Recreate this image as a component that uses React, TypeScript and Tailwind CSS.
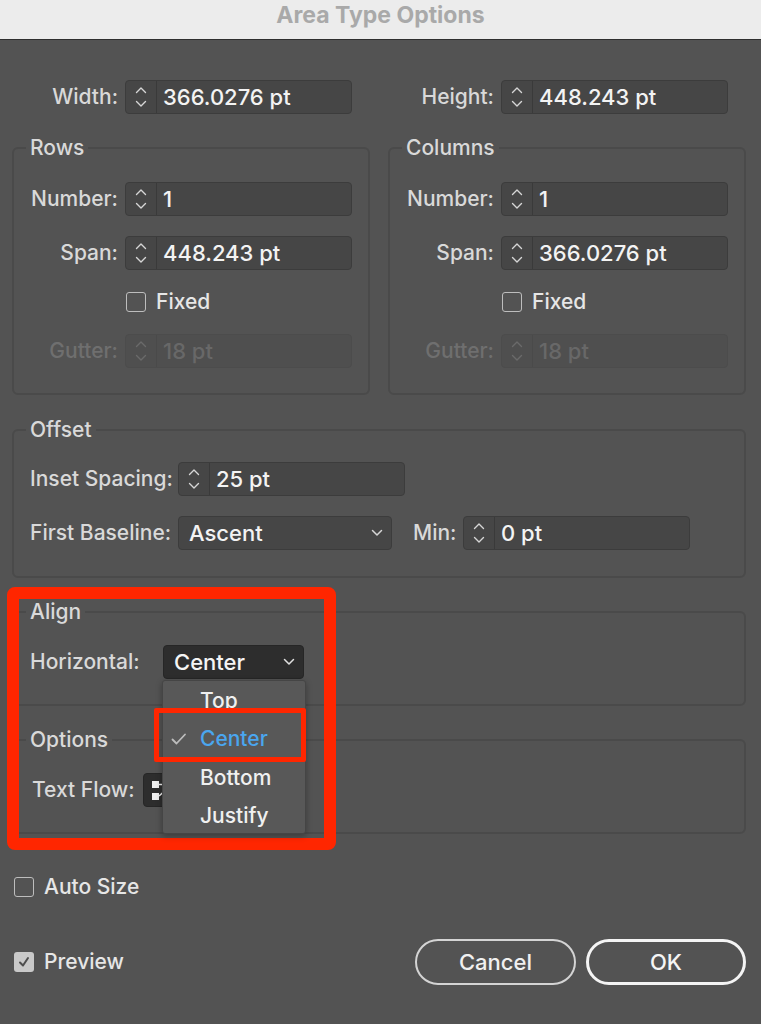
import type { ReactNode } from 'react';
import clsx from 'clsx';

const font = "font-['Inter','Noto_Sans',sans-serif]";

function Stepper({ disabled }: { disabled?: boolean }) {
  return (
    <svg
      width="14"
      height="28"
      viewBox="0 0 14 28"
      fill="none"
      stroke="currentColor"
      strokeWidth="1.4"
      strokeLinecap="round"
      strokeLinejoin="round"
      className={disabled ? 'text-[#6a6a6a]' : 'text-[#d6d6d6]'}
    >
      <path d="M2.5 9.5 L7 5 L11.5 9.5" />
      <path d="M2.5 18.5 L7 23 L11.5 18.5" />
    </svg>
  );
}

function Chevron({ className }: { className?: string }) {
  return (
    <svg width="12" height="8" viewBox="0 0 12 8" fill="none" stroke="currentColor" strokeWidth="1.5" strokeLinecap="round" strokeLinejoin="round" className={className}>
      <path d="M1.5 1.5 L6 6 L10.5 1.5" />
    </svg>
  );
}

function Spinner({ value, disabled, w = 'w-[227px]' }: { value: string; disabled?: boolean; w?: string }) {
  return (
    <div
      className={clsx(
        'flex h-[34px] shrink-0 rounded-[4px] border',
        w,
        disabled ? 'border-[#4c4c4c] bg-[#4f4f4f]' : 'border-[#3c3c3c] bg-[#464646]'
      )}
    >
      <div className={clsx('flex w-[31px] items-center justify-center border-r', disabled ? 'border-[#4a4a4a]' : 'border-[#3a3a3a]')}>
        <Stepper disabled={disabled} />
      </div>
      <div className={clsx('flex items-center pl-[6px] text-[22px] font-medium', disabled ? 'text-[#686868]' : 'text-[#f3f3f3]')}>{value}</div>
    </div>
  );
}

function Checkbox({ checked }: { checked?: boolean }) {
  if (checked) {
    return (
      <span className="flex h-[20px] w-[20px] items-center justify-center rounded-[3px] bg-[#c9c9c9]">
        <svg width="14" height="14" viewBox="0 0 14 14" fill="none" stroke="#4e4e4e" strokeWidth="2" strokeLinecap="round" strokeLinejoin="round">
          <path d="M3 7.5 L6 10.5 L11 3" />
        </svg>
      </span>
    );
  }
  return <span className="h-[20px] w-[20px] rounded-[3px] border-[1.5px] border-[#bdbdbd]" />;
}

function Group({ title, className, children }: { title: string; className?: string; children: ReactNode }) {
  return (
    <fieldset className={clsx('rounded-[6px] border-2 border-[#4a4a4a]', className)}>
      <legend className="ml-[12px] px-[4px] text-[21px] font-medium leading-[24px] text-[#d9d9d9]">{title}</legend>
      {children}
    </fieldset>
  );
}

function Label({ children, disabled, className }: { children: ReactNode; disabled?: boolean; className?: string }) {
  return (
    <span className={clsx('shrink-0 whitespace-nowrap text-[21px] font-medium', disabled ? 'text-[#6f6f6f]' : 'text-[#d9d9d9]', className)}>
      {children}
    </span>
  );
}

function Field({ label, value, disabled }: { label: string; value: string; disabled?: boolean }) {
  return (
    <div className="flex h-[34px] items-center gap-[7px]">
      <Label disabled={disabled} className="w-[91px] text-right">
        {label}
      </Label>
      <Spinner value={value} disabled={disabled} />
    </div>
  );
}

function FlowGroup({ title, span }: { title: string; span: string }) {
  return (
    <Group title={title}>
      <div className="flex flex-col gap-[20px] pb-[25px] pl-[13px] pt-[22px]">
        <Field label="Number:" value="1" />
        <Field label="Span:" value={span} />
        <div className="flex h-[24px] items-center">
          <span className="w-[99px]" />
          <Checkbox />
          <span className="ml-[10px] text-[21px] font-medium text-[#e6e6e6]">Fixed</span>
        </div>
        <Field label="Gutter:" value="18 pt" disabled />
      </div>
    </Group>
  );
}

const menuItems = ['Top', 'Center', 'Bottom', 'Justify'];

export default function App() {
  return (
    <div className={clsx('relative h-[1024px] w-[761px] overflow-hidden bg-[#535353]', font)}>
      {/* Title bar */}
      <div className="flex h-[40px] justify-center border-b border-[#2e2e2e] bg-[#ececec] pt-[1px]">
        <span className="text-[23px] font-bold leading-[28px] text-[#a9a9a9]">Area Type Options</span>
      </div>

      <div className="pl-[12px] pr-[15px]">
        {/* Width / Height */}
        <div className="mt-[40px] grid grid-cols-2 gap-x-[18px]">
          <div className="pl-[15px]">
            <Field label="Width:" value="366.0276 pt" />
          </div>
          <div className="pl-[15px]">
            <Field label="Height:" value="448.243 pt" />
          </div>
        </div>

        {/* Rows / Columns */}
        <div className="mt-[22px] grid grid-cols-2 gap-x-[18px]">
          <FlowGroup title="Rows" span="448.243 pt" />
          <FlowGroup title="Columns" span="366.0276 pt" />
        </div>

        {/* Offset */}
        <Group title="Offset" className="mt-[23px]">
          <div className="flex flex-col gap-[20px] pb-[26px] pl-[16px] pt-[20px]">
            <div className="flex h-[34px] items-center">
              <Label className="w-[148px] text-[20px]">Inset Spacing:</Label>
              <Spinner value="25 pt" />
            </div>
            <div className="flex h-[34px] items-center">
              <Label className="w-[148px] text-[20px]">First Baseline:</Label>
              <div className="flex h-[34px] w-[214px] shrink-0 items-center justify-between rounded-[4px] border border-[#3c3c3c] bg-[#464646] pl-[10px] pr-[8px]">
                <span className="text-[22px] font-medium text-[#f3f3f3]">Ascent</span>
                <Chevron className="text-[#d6d6d6]" />
              </div>
              <Label className="ml-[21px] w-[50px]">Min:</Label>
              <Spinner value="0 pt" />
            </div>
          </div>
        </Group>

        {/* Align */}
        <Group title="Align" className="mt-[22px]">
          <div className="flex h-[80px] items-start pl-[16px] pt-[21px]">
            <Label className="flex h-[34px] w-[133px] items-center">Horizontal:</Label>
            <div className="relative">
              <div className="flex h-[34px] w-[141px] items-center justify-between rounded-[4px] border border-[#262626] bg-[#2d2d2d] pl-[10px] pr-[8px]">
                <span className="text-[22px] font-medium text-[#f5f5f5]">Center</span>
                <Chevron className="text-[#e0e0e0]" />
              </div>
              {/* Open dropdown menu */}
              <div className="absolute left-[-1px] top-[35px] z-10 h-[154px] w-[144px] overflow-hidden rounded-[3px] border border-[#454545] bg-[#585858] shadow-[0_2px_6px_rgba(0,0,0,0.3)]">
                {menuItems.map((item) => (
                  <div key={item} className="relative flex h-[38.5px] shrink-0 items-center pl-[37px]">
                    {item === 'Center' && (
                      <svg width="16" height="14" viewBox="0 0 16 14" fill="none" stroke="#bdbdbd" strokeWidth="1.8" strokeLinecap="round" strokeLinejoin="round" className="absolute left-[8px] top-[12px]">
                        <path d="M1.5 7.5 L5.5 11.5 L14 2.5" />
                      </svg>
                    )}
                    <span className={clsx('text-[21px] font-medium', item === 'Center' ? 'text-[#4aa6ef]' : 'text-[#f0f0f0]')}>{item}</span>
                  </div>
                ))}
              </div>
            </div>
          </div>
        </Group>

        {/* Options */}
        <Group title="Options" className="mt-[22px]">
          <div className="flex pb-[25px] pl-[18px] pt-[21px]">
            <Label className="flex h-[34px] w-[111px] items-center">Text Flow:</Label>
            <div className="flex h-[34px] w-[60px] items-center rounded-[4px] border border-[#262626] bg-[#2d2d2d] pl-[6px]">
              <svg width="40" height="28" viewBox="0 0 40 28" fill="none">
                <rect x="2" y="5" width="7" height="7" fill="#f0f0f0" />
                <rect x="2" y="17" width="7" height="7" fill="#f0f0f0" />
                <path d="M9 8.5 H22 L9 20" stroke="#f0f0f0" strokeWidth="1.6" />
              </svg>
            </div>
          </div>
        </Group>

        {/* Auto Size */}
        <div className="mt-[41px] flex h-[24px] items-center pl-[2px]">
          <Checkbox />
          <span className="ml-[10px] text-[21px] font-medium text-[#e6e6e6]">Auto Size</span>
        </div>

        {/* Footer */}
        <div className="mt-[40px] flex h-[46px] items-center">
          <div className="flex items-center pl-[2px]">
            <Checkbox checked />
            <span className="ml-[10px] text-[21px] font-medium text-[#e6e6e6]">Preview</span>
          </div>
          <div className="ml-auto flex gap-[10px]">
            <button className="h-[46px] w-[161px] rounded-full border-2 border-[#d4d4d4] text-[22px] font-medium text-[#f0f0f0]">Cancel</button>
            <button className="h-[46px] w-[160px] rounded-full border-[3px] border-[#f4f4f4] text-[22px] font-medium text-[#f5f5f5]">OK</button>
          </div>
        </div>
      </div>

      {/* Annotation highlights */}
      <div className="pointer-events-none absolute left-[7px] top-[587px] h-[263px] w-[329px] rounded-[8px] border-[12px] border-[#ff2600]" />
      <div className="pointer-events-none absolute left-[154px] top-[708px] z-20 h-[54px] w-[152px] rounded-[2px] border-[5px] border-[#ff2600]" />
    </div>
  );
}
